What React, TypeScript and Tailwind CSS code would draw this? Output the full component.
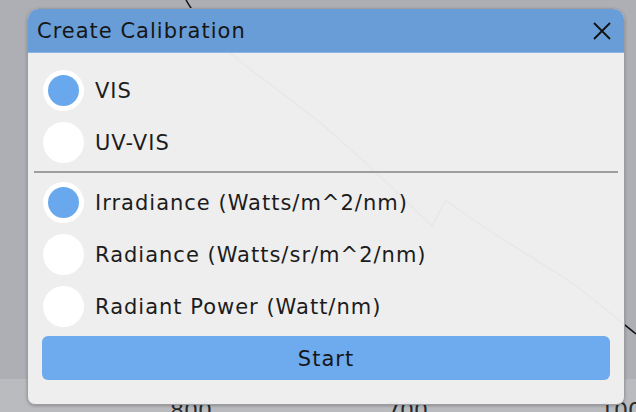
import { useState } from "react";

const sensors = ["VIS", "UV-VIS"];
const units = [
    "Irradiance (Watts/m^2/nm)",
    "Radiance (Watts/sr/m^2/nm)",
    "Radiant Power (Watt/nm)",
];

function Radio({ label, checked, onClick }: { label: string; checked: boolean; onClick: () => void }) {
    return (
        <button onClick={onClick} className="flex items-center gap-[11px] h-[52px] pl-[15px] text-left">
            <span className="w-[41px] h-[41px] rounded-full bg-white flex items-center justify-center shrink-0">
                {checked && <span className="w-[31px] h-[31px] rounded-full bg-[#6aa8ee]" />}
            </span>
            <span className="pt-[3px] text-[21px] tracking-[1px] text-[#1c1c1c]">{label}</span>
        </button>
    );
}

function Background() {
    // the spectrum chart that sits behind the dialog
    return (
        <svg className="absolute inset-0" width="636" height="412" viewBox="0 0 636 412">
            <rect x="0" y="0" width="636" height="379" fill="#adafb5" />
            <rect x="0" y="379" width="636" height="33" fill="#babbbe" />
            <path
                d="M186 0 C196 18 212 34 229 52 C262 80 300 104 340 140 C380 175 410 205 432 226 L446 200 C470 220 520 250 560 275 C590 295 612 315 636 334"
                fill="none"
                stroke="#111"
                strokeWidth="1.5"
            />
            <text x="170" y="418" fontSize="22" fill="#2a2a2a" fontFamily="DejaVu Sans, sans-serif">800</text>
            <text x="386" y="418" fontSize="22" fill="#2a2a2a" fontFamily="DejaVu Sans, sans-serif">700</text>
            <text x="600" y="418" fontSize="22" fill="#2a2a2a" fontFamily="DejaVu Sans, sans-serif">100</text>
        </svg>
    );
}

export default function App() {
    const [sensor, setSensor] = useState(0);
    const [unit, setUnit] = useState(0);

    return (
        <div className="relative w-[636px] h-[412px] overflow-hidden bg-[#adafb5]" style={{ fontFamily: '"DejaVu Sans", sans-serif' }}>
            <Background />
            <div className="relative ml-[27px] mt-[8px] w-[598px] h-[397px] flex flex-col rounded-t-[12px] rounded-b-[8px] border border-[#9c9ea3] bg-[#efefef]/[0.97] shadow-[0_1px_3px_rgba(0,0,0,0.25)] overflow-hidden">
                <div className="h-[44px] shrink-0 flex items-center justify-between pl-[9px] pr-[12px] bg-[#689dd7] border-b border-[#8fb4e0]">
                    <span className="pt-[2px] text-[21px] tracking-[1px] text-[#161616]">Create Calibration</span>
                    <svg width="20" height="20" viewBox="0 0 20 20" className="text-[#111]">
                        <path d="M2 2 L18 18 M18 2 L2 18" stroke="currentColor" strokeWidth="1.8" />
                    </svg>
                </div>
                <div className="flex flex-col pt-[11px]">
                    {sensors.map((s, i) => (
                        <Radio key={s} label={s} checked={sensor === i} onClick={() => setSensor(i)} />
                    ))}
                    <div className="mx-[6px] my-[3px] h-[2px] bg-[#9e9e9e]" />
                    {units.map((u, i) => (
                        <Radio key={u} label={u} checked={unit === i} onClick={() => setUnit(i)} />
                    ))}
                </div>
                <div className="px-[14px] pt-[4px]">
                    <button className="w-full h-[44px] pt-[3px] rounded-[6px] bg-[#6eaaee] text-[21px] tracking-[1px] text-[#161616]">Start</button>
                </div>
            </div>
        </div>
    );
}
